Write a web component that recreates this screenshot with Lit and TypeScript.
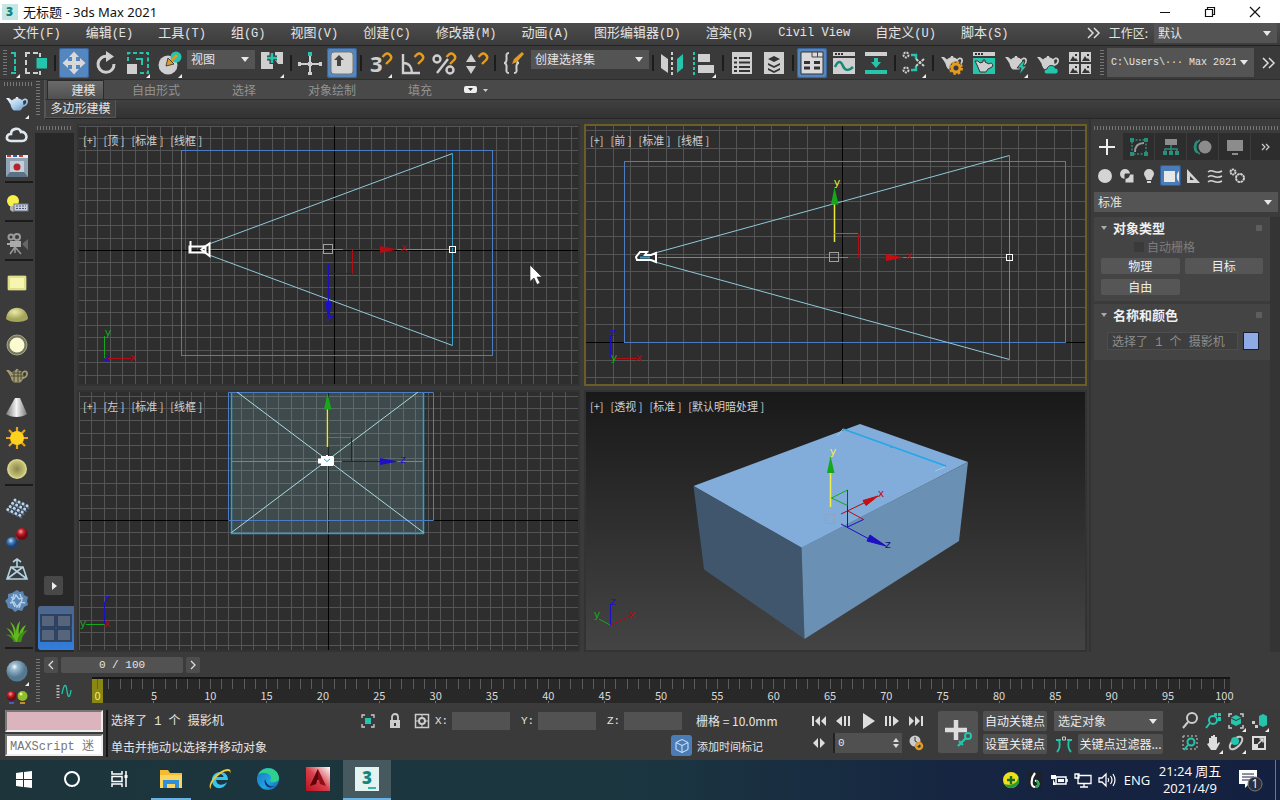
import { LitElement, html, svg, css } from "lit";
import { customElement, state } from "lit/decorators.js";
import { classMap } from "lit/directives/class-map.js";

const L = "#cfcfcf";
const T = "#25c4ac";
const G = "#e39b22";

const icon = (body: unknown, size = 24) =>
  html`<svg class="ic" viewBox="0 0 ${size} ${size}" width=${size} height=${size} aria-hidden="true">${body}</svg>`;

const magnet = svg`<path d="M14.500 6L17 3.500C20 1 25 5 22.500 8.500L18 13" fill="none" stroke=${G} stroke-width="2.400"/>`;
const teapot = (fill: string) => svg`<path fill=${fill} d="M1 6h3l3 2.500c1-1.200 2-1.700 3.500-2L11 5h2l.5 1.500c1.500.3 2.600.8 3.500 1.700C19 5.500 23 6 23 9.500c0 3-2.500 5-5 5.500-1 2-2 3-3 3.500H9c-2-1-3-3.500-3.500-6L3 8.500Z"/><path d="M18 9.500c1.500-2 3.500-1.200 3.200.5-.2 1.600-1.200 2.600-2.700 3Z" fill="#3a3a3a"/>`;

const tools: Record<string, unknown> = {
  region: svg`<path d="M1 2H17M1 22H17M2 1V23" stroke=${L} stroke-width="2" stroke-dasharray="5 3" fill="none"/><path d="M16 2v22" stroke=${L} stroke-width="2" stroke-dasharray="4 14"/><rect x="12.500" y="7" width="10.500" height="10.500" fill=${T}/>`,
  move: svg`<path fill="#d8d8d8" d="M12 .5L17 6h-3v4h4V7l5.500 5-5.500 5v-3h-4v4h3l-5 5.500L7 18h3v-4H6v3L.5 12 6 7v3h4V6H7Z"/>`,
  rotate: svg`<path d="M13.500 5.500A8 8 0 1 0 20 13" fill="none" stroke=${L} stroke-width="3"/><path d="M12 0l8 5.500-8 5.500Z" fill=${L}/>`,
  scale: svg`<path d="M2 10V2H22V22H14" fill="none" stroke=${T} stroke-width="2" stroke-dasharray="4 2.500"/><rect x="1" y="13" width="10" height="10" fill=${L}/><path d="M10 8h6v6" fill="none" stroke=${T} stroke-width="2"/>`,
  place: svg`<circle cx="10" cy="14" r="9.500" fill=${L}/><circle cx="18" cy="6" r="5.500" fill=${T}/><path d="M19 4l-7 7" stroke=${G} stroke-width="3"/><path d="M8 15l2-8 6 6Z" fill=${G} stroke="#444"/>`,
  pivot: svg`<path d="M1 1h9v8h3v9H1ZM15 1h8v12h-5l-2-3h-1Z" fill=${L}/><path d="M12 1v12M7 7h10" stroke="#3a3a3a" stroke-width="5"/><path d="M12 2v10M7 7h10" stroke=${T} stroke-width="2.500"/>`,
  manip: svg`<path d="M12 5V23M1 13H23" stroke=${L} stroke-width="2"/><path d="M10 11h4v4h-4ZM0 11h3v4H0ZM21 11h3v4h-3ZM10 21h4v3h-4Z" fill=${L}/><rect x="10" y="1" width="4" height="4" fill=${T}/>`,
  keyb: svg`<rect x="1" y="1" width="22" height="22" rx="3" fill="#d4d4d4" stroke="#777"/><path d="M9 4l5 5h-3v6H7V9H4Z" fill="#444"/>`,
  snap: svg`<text x="2" y="21" font-family="Open Sans, sans-serif" font-weight="700" font-size="22" fill=${L}>3</text>${magnet}`,
  angle: svg`<path d="M3 3V22H20M3 12c6 0 9 4 9 10" fill="none" stroke=${L} stroke-width="2.400"/>${magnet}`,
  percent: svg`<circle cx="5" cy="8" r="3.500" fill="none" stroke=${L} stroke-width="2.400"/><circle cx="18" cy="19" r="3.500" fill="none" stroke=${L} stroke-width="2.400"/><path d="M16 8L5 22" stroke=${L} stroke-width="2.400"/>${magnet}`,
  spin: svg`<path d="M2 11l5-8 5 8ZM2 15h10l-5 8Z" fill=${L}/>${magnet}`,
  sets: svg`<path d="M7 2C3 2 5 6 4.500 9 4.300 11 3 12 2 12c1 0 2.300 1 2.500 3 .5 3-1.500 7 2.500 7M12 22c4 0 2-4 2.500-7 .2-2 1.500-3 2.500-3-1 0-2-1-2.500-2" fill="none" stroke=${L} stroke-width="2"/><path d="M10 13l2-5 8-7 2 2-7 8Z" fill=${G}/>`,
  mirror: svg`<path d="M1 3l7 5v14l-7-5Z" fill=${L}/><path d="M12 1V24" stroke=${L} stroke-width="2" stroke-dasharray="3 2"/><path d="M23 3l-6 5v14l6-5Z" fill=${T}/>`,
  align: svg`<path d="M2 1V24" stroke=${T} stroke-width="2" stroke-dasharray="3 2"/><path d="M6 3h12v8H6ZM6 14h16v8H6Z" fill=${L}/>`,
  list: svg`<path d="M2 1h20v22H2Z" fill=${L}/><path d="M4 7h3M9 7h11M4 11.500h3M9 11.500h11M4 16h3M9 16h11M4 20h3M9 20h11" stroke="#333" stroke-width="2"/>`,
  layers: svg`<path d="M2 1h20v22H2Z" fill=${L}/><path d="M12 5l6 3-6 3-6-3ZM6 12l6 3 6-3v2l-6 3-6-3ZM6 17l6 3 6-3v2l-6 3-6-3Z" fill="#333"/>`,
  ribbon: svg`<path d="M1 1h22v22H1Z" fill="#dadada" stroke="#333"/><path d="M12 1v5h11M17.500 1v5" stroke="#444" fill="none"/><path d="M4 11.500h6M14 11.500h6M4 17h6M14 17h6" stroke="#333" stroke-width="3"/>`,
  curve: svg`<path d="M1 1h22v4H1Z" fill=${L}/><path d="M3 3h9" stroke="#333" stroke-width="2" stroke-dasharray="2 1"/><path d="M1 7h22v16H1Z" fill=${L}/><path d="M3 16c3-7 6-6 8-1s6 5 10 1" fill="none" stroke="#138b78" stroke-width="2.500"/>`,
  dope: svg`<path d="M1 1h22v4H1Z" fill=${L}/><path d="M1 19h22v4H1Z" fill=${T}/><path d="M12 7v5" stroke=${T} stroke-width="4"/><path d="M7 11h10l-5 6Z" fill=${T}/>`,
  schem: svg`<g fill="none" stroke=${L} stroke-width="2" stroke-dasharray="2 1"><circle cx="4" cy="4" r="2.500"/><circle cx="4" cy="19" r="2.500"/></g><path d="M9 4h5v4M9 19h5v-4" fill="none" stroke=${T} stroke-width="2.400"/><path d="M14 8l8 7M22 8l-8 7" stroke=${L} stroke-width="2" stroke-dasharray="3 1"/>`,
  setup: svg`${teapot(L)}<circle cx="16" cy="17" r="6.500" fill="#3a3a3a"/><circle cx="16" cy="17" r="4" fill="none" stroke=${G} stroke-width="3"/><circle cx="16" cy="17" r="6" fill="none" stroke=${G} stroke-width="2" stroke-dasharray="2.500 2.200"/>`,
  frame: svg`<path d="M1 1h22v4H1Z" fill=${L}/><path d="M3 3h9" stroke="#333" stroke-width="2" stroke-dasharray="2 1"/><path d="M1 7h22v16H1Z" fill=${T}/><path d="M3 10h3l2 2 3-1V9h2v2l4 2c2-2 5 0 3 3l-4 2-2 3H8l-3-7Z" fill=${L} stroke="#333"/>`,
  render: svg`${teapot(L)}<path d="M19 10l-6 7h4l-2 7 8-9h-4l2-5Z" fill=${T} stroke="#3a3a3a"/>`,
  cloud: svg`${teapot(L)}<path d="M10 23c-3-1-2-5 1-5 1-5 8-4 8-1 4 0 4 5 1 6Z" fill=${T} stroke="#3a3a3a"/>`,
  gallery: svg`<path d="M1 1h10v10H1ZM13 1h10v10H13ZM1 13h10v10H1ZM13 13h10v10H13Z" fill=${L}/><path d="M2 10l3-5 2 3 1-1 2 3ZM14 10l3-5 2 3 1-1 2 3ZM2 22l3-5 2 3 1-1 2 3ZM14 22l3-5 2 3 1-1 2 3ZM7 3h2v2H7ZM19 3h2v2h-2ZM7 15h2v2H7ZM19 15h2v2h-2Z" fill="#333"/>`,
};

const rail: Record<string, unknown> = {
  teapot: svg`<g>${teapot("url(#ice)")}</g>`,
  cloud: svg`<path d="M6 18c-6 0-5-7 0-7 0-6 9-7 10-2 6-1 8 9 1 9Z" fill="none" stroke="#dfe8ef" stroke-width="2.600"/>`,
  window: svg`<path d="M1 1h22v3H1Z" fill="#eee"/><path d="M2 1h4v2H2ZM14 1h4v2h-4Z" fill="#c33"/><path d="M8 1h4v2H8Z" fill="#35a"/><path d="M1 4h22v19H1Z" fill="#8fa3b5"/><path d="M5 7h14v11H5Z" fill="#c2ced8"/><path d="M1 23l4-5h14l4 5Z" fill="#5d7184"/><circle cx="12" cy="13" r="3.500" fill="#b8222c"/>`,
  bulb: svg`<circle cx="8" cy="8" r="6" fill="#f7ef4a"/><path d="M5 13h6v3l-3 3-3-2Z" fill="#b7b7a0"/><rect x="9" y="11" width="14" height="7" fill="#c9ced8" stroke="#6b7690"/><path d="M11 13h10M11 15.500h10" stroke="#4a5670" stroke-dasharray="2 1"/>`,
  camera: svg`<g stroke="#9a9a9a" fill="none" stroke-width="2"><circle cx="6" cy="5" r="2.500"/><circle cx="12" cy="5" r="3"/></g><path d="M5 9h11v6H5ZM2 11h3v2H2Z" fill="#aaa"/><path d="M10 15l-5 7M10 15l6 7M10 15v6" stroke="#999" stroke-width="1.500"/><path d="M17 12l6-5v11Z" fill="#666"/>`,
  rect: svg`<rect x="2" y="4" width="20" height="16" rx="3" fill="#77785f"/><rect x="4" y="6" width="16" height="12" fill="#f7f6b0" stroke="#e1e08a" stroke-width="2"/>`,
  dome: svg`<path d="M1 17C2 2 22 2 23 17c-4 4-18 4-22 0Z" fill="url(#dome)"/>`,
  sphere: svg`<circle cx="12" cy="12" r="10" fill="#77785f" stroke="#a6a78a"/><circle cx="12" cy="12" r="7.500" fill="#fbfad0"/>`,
  pot2: svg`${teapot("#a39c72")}<path d="M7 9h10M6 12h12M9 7v11M13 6v12M16 8v8" stroke="#3f3b28" stroke-width=".8"/>`,
  cone: svg`<path d="M10 3h5l7 16c-5 4-16 4-21 0Z" fill="url(#cone)"/>`,
  sun: svg`<path d="M12 1v22M1 12h22M4 4l16 16M20 4L4 20" stroke="#e6a516" stroke-width="2.200"/><circle cx="12" cy="12" r="7" fill="#ffd21f"/>`,
  disc: svg`<circle cx="12" cy="12" r="10" fill="#d9d58a"/><circle cx="12" cy="12" r="8.500" fill="url(#disc)"/>`,
  dots: [0, 1, 2, 3].map((r) => [0, 1, 2, 3].map((c) => {
    const x = 10 - r * 2.4 + c * 4;
    const y = 4 + r * 3.2 + c * 1.9;
    return svg`<path d="M${x} ${y + 1}l2 2" stroke="#4d6a88" stroke-width="2"/><circle cx=${x} cy=${y} r="1.500" fill="#bcd6ee"/>`;
  })),
  mol: svg`<path d="M7 16L17 7" stroke="#8a3540" stroke-width="4"/><circle cx="17" cy="7" r="6" fill="url(#red)"/><circle cx="7" cy="16" r="6" fill="url(#blu)"/>`,
  pyr: svg`<path d="M12 1v8M8 4l4-3 4 3M6 9h12l4 12H2ZM6 9l16 12M18 9L2 21" fill="none" stroke="#b3d3e2" stroke-width="1.600"/>`,
  puff: svg`<path d="M12 1l3 2 3-1 1 4 4 2-1 4 1 4-4 2-2 4-4-1-3 2-3-3-4-1-1-4-2-3 3-3 0-4 4-1Z" fill="#5d87b4"/><path d="M6 8l3 2 2-4 3 4 4-1M5 14l4-1 3 5 4-5 4 1M9 5l-2 7 3 6M15 5l2 6-3 8" stroke="#b4d2ec" stroke-width="1.300" fill="none"/>`,
  grass: svg`<path d="M9 22C7 14 4 10 1 8c5 1 7 5 8 8C9 9 7 5 5 2c5 3 6 8 6 12 0-6 1-10 4-13-1 6-2 10-1 14 1-5 3-8 7-10-3 5-4 10-5 17Z" fill="#62b81e"/><path d="M12 22c1-7 5-11 11-12-5 4-6 8-7 12ZM9 22C7 18 5 16 1 15c4-1 8 1 10 7Z" fill="#3f8f12"/>`,
  ball: svg`<circle cx="12" cy="12" r="10.500" fill="url(#ball)"/>`,
};

const axisText = (x: number, y: number, c: string, t: string) =>
  svg`<text x=${x} y=${y} fill=${c} font-family="DejaVu Sans, sans-serif" font-size="11" text-anchor="middle">${t}</text>`;

const RED = "#b00d14";
const GRN = "#16a81c";
const BLU = "#1d10c4";

function lines(ox: number, oy: number, step: number, x0: number, x1: number, y0: number, y1: number) {
  let d = "";
  for (let k = Math.ceil((x0 - ox) / step); ox + k * step < x1; k++) d += `M${Math.round(ox + k * step) - 0.5} ${y0}V${y1}`;
  for (let k = Math.ceil((y0 - oy) / step); oy + k * step < y1; k++) d += `M${x0} ${Math.round(oy + k * step) - 0.5}H${x1}`;
  return svg`<path d=${d} stroke="#545454" fill="none"/>`;
}

const sceneTop = svg`
  ${lines(335, 251, 12.45, 79, 578, 126, 384)}
  <path d="M334.500 126V384M79 250.500H578" stroke="#000"/>
  <rect x="181.500" y="150.500" width="311" height="205" fill="none" stroke="#4b7cc4"/>
  <path d="M201 247L452.500 153.500M201 252L452.500 345.500" stroke="#8ccbd9"/>
  <path d="M452.500 153.500V345.500M209 249.500H452" stroke="#2f9fd0"/>
  <path d="M190.500 241v12.500M189.500 246.500h16v6h-16ZM209.500 243.500v12.500l-8-6.500Z" fill="none" stroke="#fff" stroke-width="2"/>
  <rect x="449.500" y="246.500" width="6" height="6" fill="#2e2e2e" stroke="#fff"/><path d="M452.500 248v4" stroke="#2f9fd0"/>
  <rect x="323.500" y="244.500" width="9" height="9" fill="none" stroke="#a0a0a0"/>
  <path d="M343 249.500H381M352.500 249V274" stroke=${RED} fill="none"/><path d="M380 246l18 3.500-18 3.500Z" fill=${RED}/>
  <path d="M328.500 273.500H352M328.500 264V303" stroke=${BLU} fill="none"/><path d="M325 302h7l-3.500 18Z" fill=${BLU}/>
  ${axisText(404, 251, RED, "x")}${axisText(331, 322, BLU, "z")}
  <path d="M104.500 336V358" stroke=${GRN}/><path d="M105 358.500H131" stroke=${RED}/>
  ${axisText(108, 336, GRN, "y")}${axisText(107, 361, BLU, "z")}${axisText(133, 361, RED, "x")}
  <path d="M530 265v16.500l4-3.500 3 6.500 3-1.500-3-6h5Z" fill="#fff" stroke="#222" stroke-width=".6"/>`;

const sceneFront = svg`
  ${lines(843, 343, 17.64, 586, 1085, 126, 384)}
  <path d="M842.500 126V384M586 342.500H1085" stroke="#000"/>
  <rect x="624.500" y="161.500" width="441" height="181" fill="none" stroke="#4b7cc4"/>
  <path d="M655 253L1009.500 155.500M655 262L1009.500 359.500" stroke="#8ccbd9"/>
  <path d="M1009.500 155.500V359.500M658 257.500H1009" stroke="#2f9fd0"/>
  <path d="M640 252h7l-2 3h6l5-2v9l-5-2H637l-1-3Z" fill="none" stroke="#fff" stroke-width="2"/><path d="M640 257.500h10" stroke="#2f9fd0" stroke-width="2"/>
  <rect x="1006.500" y="254.500" width="6" height="6" fill="#2e2e2e" stroke="#fff"/><path d="M1009.500 256v4" stroke="#2f9fd0"/>
  <rect x="829.500" y="252.500" width="9" height="9" fill="none" stroke="#a0a0a0"/>
  <path d="M834.500 204V242" stroke="#e8e83c" stroke-width="1.500"/><path d="M831 204.500h7.500L834.500 187Z" fill=${GRN}/>
  <path d="M834.500 233.500H858" stroke=${GRN}/><path d="M858.500 234V257M848 257.500H887" stroke=${RED}/><path d="M886 254l18 3.500-18 3.500Z" fill="#c80c10"/>
  ${axisText(837, 186, "#e8e83c", "y")}${axisText(909, 259, RED, "x")}
  <path d="M610.500 335V358" stroke=${BLU}/><path d="M615 358.500H637" stroke=${RED}/>
  ${axisText(613, 336, BLU, "z")}${axisText(614, 361, GRN, "y")}${axisText(639, 361, RED, "x")}`;

const sceneLeft = svg`
  ${lines(329, 521, 12.45, 79, 578, 392, 650)}
  <path d="M328.500 392V650M79 520.500H578" stroke="#000"/>
  <rect x="231.500" y="391.500" width="192" height="142" fill="#8fd4dc" fill-opacity=".17" stroke="#2f9fd0" stroke-width="1.500"/>
  <path d="M228.500 520.500V392.500H433.500V520.500Z" fill="none" stroke="#4b7cc4"/>
  <path d="M237 392L423.500 532.500M418 392L231.500 532.500" stroke="#a9dbe2"/>
  <path d="M232 461.500H423M327.500 461V533" stroke="#2f9fd0"/>
  <path d="M322 457h10v8h-10ZM318 459.500h4v3h-4M333 456.500v9M327 455v2" fill="#fff" stroke="#fff" stroke-width="2"/>
  <path d="M324 459l3 2.500 3-2.500" fill="none" stroke="#2f9fd0"/>
  <path d="M327.500 408V447" stroke="#e8e83c" stroke-width="1.500"/><path d="M324 409.500h7.500L327.500 393Z" fill=${GRN}/>
  <path d="M328 437.500H351" stroke=${GRN}/><path d="M351.500 438V461M342 461.500H381" stroke=${BLU}/><path d="M380 458l18 3.500-18 3.500Z" fill=${BLU}/>
  ${axisText(403, 463, BLU, "z")}
  <path d="M104.500 602V624" stroke=${BLU}/><path d="M86 624.500H104" stroke=${GRN}/>
  ${axisText(107, 602, BLU, "z")}${axisText(83, 627, GRN, "y")}${axisText(107, 627, RED, "x")}`;

const scenePersp = svg`
  <defs>
    <linearGradient id="bg" x2="0" y2="1"><stop stop-color="#191919"/><stop offset="1" stop-color="#444"/></linearGradient>
    <linearGradient id="ice" x2="1" y2="1"><stop stop-color="#fff"/><stop offset=".55" stop-color="#a8cdea"/><stop offset="1" stop-color="#5c88b8"/></linearGradient>
    <radialGradient id="dome" cx=".4" cy=".3"><stop stop-color="#eceaa8"/><stop offset="1" stop-color="#a5a45c"/></radialGradient>
    <linearGradient id="cone"><stop stop-color="#777"/><stop offset=".5" stop-color="#f4f4f4"/><stop offset="1" stop-color="#777"/></linearGradient>
    <radialGradient id="disc"><stop stop-color="#8a874a"/><stop offset="1" stop-color="#c9c57c"/></radialGradient>
    <radialGradient id="red" cx=".4" cy=".3"><stop stop-color="#f5a0a0"/><stop offset=".5" stop-color="#c41e2a"/><stop offset="1" stop-color="#6e0c14"/></radialGradient>
    <radialGradient id="blu" cx=".4" cy=".3"><stop stop-color="#bcd8f4"/><stop offset=".5" stop-color="#3e78b4"/><stop offset="1" stop-color="#1d3f6a"/></radialGradient>
    <radialGradient id="ball" cx=".38" cy=".3"><stop stop-color="#fff"/><stop offset=".3" stop-color="#9bbbd0"/><stop offset="1" stop-color="#54788f"/></radialGradient>
    <linearGradient id="edge" x2="1" y2="1"><stop stop-color="#1b6fc8"/><stop offset=".6" stop-color="#1fa5e0"/><stop offset="1" stop-color="#1a56b0"/></linearGradient>
    <linearGradient id="cad" x1="0" y1="1" x2="1" y2="0"><stop stop-color="#b8121f"/><stop offset=".5" stop-color="#d8404c"/><stop offset="1" stop-color="#fff"/></linearGradient>
  </defs>
  <rect x="586" y="392" width="499" height="258" fill="url(#bg)"/>
  <path d="M693.500 486L860 424 968 462 801.500 548Z" fill="#82acd9"/>
  <path d="M693.500 486L801.500 547.500 804.500 639 704 569.500Z" fill="#40566c"/>
  <path d="M801.500 547.500L968 462 959 541 804.500 639Z" fill="#6a90b3"/>
  <path d="M843 429L946 466M891 446v2" stroke="#22a8e8" stroke-width="1.500"/><path d="M945 467L935 471M843 429L837 436" stroke="#8cd2f0"/>
  <rect x="825.500" y="514.500" width="9" height="9" fill="none" stroke="#8aa5bd"/>
  <path d="M830.500 472V507" stroke="#f0f04a" stroke-width="1.500"/><path d="M827 473h7.500L830.500 456Z" fill=${GRN}/>
  <path d="M847.500 490L831.500 498 847.500 505.500" fill="none" stroke=${GRN}/>
  <path d="M847.500 490V510M841 514L866 502M848 511L863.500 519.500" fill="none" stroke=${RED}/><path d="M863 500.500L878 496 866 505.500Z" fill="#c80c10" stroke="#c80c10"/>
  <path d="M847.500 506V527L863.500 519.500M841 524L869 539" fill="none" stroke=${BLU}/><path d="M870 535L886 546 867 541Z" fill=${BLU} stroke=${BLU}/>
  ${axisText(833, 455, "#f0f04a", "y")}${axisText(881, 497, "#c80c10", "x")}${axisText(888, 548, "#15107a", "z")}
  <path d="M610.500 604V625" stroke=${BLU}/><path d="M611 625L630 616" stroke=${RED}/><path d="M610 625L599 619" stroke=${GRN}/>
  ${axisText(613, 605, BLU, "z")}${axisText(632, 618, RED, "x")}${axisText(597, 618, GRN, "y")}`;

const menus = [["文件", "(F)"], ["编辑", "(E)"], ["工具", "(T)"], ["组", "(G)"], ["视图", "(V)"], ["创建", "(C)"], ["修改器", "(M)"], ["动画", "(A)"], ["图形编辑器", "(D)"], ["渲染", "(R)"], ["", "Civil View"], ["自定义", "(U)"], ["脚本", "(S)"]];

const views = [
  { box: "79 126 499 258", labels: ["[+]", "[顶 ]", "[标准 ]", "[线框 ]"], scene: sceneTop },
  { box: "586 126 499 258", labels: ["[+]", "[前 ]", "[标准 ]", "[线框 ]"], scene: sceneFront },
  { box: "79 392 499 258", labels: ["[+]", "[左 ]", "[标准 ]", "[线框 ]"], scene: sceneLeft },
  { box: "586 392 499 258", labels: ["[+]", "[透视 ]", "[标准 ]", "[默认明暗处理 ]"], scene: scenePersp },
];

const panelTabs = [
  svg`<path d="M12 4V20M4 12H20" stroke="#eee" stroke-width="2"/>`,
  svg`<rect x="5" y="5" width="14" height="14" fill="none" stroke="#2d8d7c" stroke-width="1.500" stroke-dasharray="2 1.500"/><path d="M3 3h4v4H3ZM17 3h4v4h-4ZM3 17h4v4H3ZM17 17h4v4h-4Z" fill="#2d8d7c"/><path d="M8 17c0-6 3-9 9-9" fill="none" stroke="#999" stroke-width="2"/>`,
  svg`<rect x="6" y="4" width="12" height="6" fill="#8c8c8c"/><path d="M12 10v8M6 17v-3h12v3" fill="none" stroke="#2d8d7c" stroke-width="1.500"/><path d="M4 16h4v4H4ZM10 16h4v4h-4ZM16 16h4v4h-4Z" fill="#2d8d7c"/>`,
  svg`<path d="M6 6a8 8 0 0 0 0 12M9 5a8 8 0 0 0 0 14" fill="none" stroke="#2d8d7c" stroke-width="1.500"/><circle cx="14" cy="12" r="6.500" fill="#8c8c8c"/>`,
  svg`<path d="M4 5h16v11H4ZM9 18h6v2H9Z" fill="#8c8c8c"/>`,
];
const cats = [
  svg`<circle cx="10" cy="10" r="7" fill="#d4d4d4"/>`,
  svg`<circle cx="8" cy="8" r="5" fill="#d4d4d4"/><path d="M8 8h9v9H8Z" fill="#d4d4d4" stroke="#3b3b3b"/><path d="M8 13a5 5 0 0 0 5-5H8Z" fill="#3b3b3b"/>`,
  svg`<path d="M5 8a5 5 0 0 1 10 0c0 2-2 3-2.500 6h-5C7 11 5 10 5 8ZM8 15h4v2H8Z" fill="#d4d4d4"/>`,
  svg`<path d="M3 5h11v11H3Z" fill="#e8e8e8"/><path d="M18 5v11c-3-3-3-8 0-11Z" fill="#e8e8e8"/>`,
  svg`<path d="M4 3L17 17H4ZM7 10v4h4Z" fill="#d4d4d4" fill-rule="evenodd"/>`,
  svg`<path d="M3 6c5-4 7 3 14-1M3 11c5-4 7 3 14-1M3 16c5-4 7 3 14-1" fill="none" stroke="#d4d4d4" stroke-width="1.500"/>`,
  svg`<circle cx="6" cy="6" r="2.500" fill="none" stroke="#d4d4d4" stroke-width="2" stroke-dasharray="2 .6"/><circle cx="13" cy="12" r="4" fill="none" stroke="#d4d4d4" stroke-width="2" stroke-dasharray="2.500 .6"/>`,
];

const nav = [
  svg`<circle cx="12" cy="7" r="5" fill="none" stroke="#ccc" stroke-width="2"/><path d="M8 11l-5 6" stroke="#ccc" stroke-width="2"/>`,
  svg`<path d="M11 2h3v3h-3ZM15 2h3v3h-3ZM15 6h3v4h-3Z" fill="#25c4ac"/><circle cx="10" cy="9" r="4" fill="none" stroke="#25c4ac" stroke-width="2"/><path d="M7 12l-4 5" stroke="#25c4ac" stroke-width="2"/>`,
  svg`<path d="M3 6V3h3M14 3h3v3M3 14v3h3M17 14v3h-3" fill="none" stroke="#ccc" stroke-width="1.500"/><path d="M10 4l5 2.500v6L10 15l-5-2.500v-6Z" fill="#25c4ac"/><path d="M5 7l5 2.500L15 7" fill="none" stroke="#333"/>`,
  svg`<path d="M14 3l4 2v9l-4 2-4-2V5Z" fill="#25c4ac"/><path d="M3 10h3v3H3ZM6 14h3v3H6Z" fill="#ccc"/>`,
  svg`<rect x="3" y="3" width="14" height="13" fill="none" stroke="#ccc" stroke-dasharray="2 2"/><circle cx="11" cy="9" r="3.500" fill="none" stroke="#25c4ac" stroke-width="2"/><path d="M8 12l-4 5" stroke="#25c4ac" stroke-width="2"/>`,
  svg`<path d="M6 10V5h2v4V3h2v6V2h2v7V4h2v7l2-2 1 1-4 7H8l-4-6Z" fill="#ddd"/>`,
  svg`<ellipse cx="10" cy="10" rx="8" ry="4" transform="rotate(-45 10 10)" fill="none" stroke="#ccc" stroke-width="2"/><circle cx="9" cy="8" r="4" fill="#25c4ac"/>`,
  svg`<path d="M3 3h14v14H3Z" fill="#ddd"/><path d="M5 5h10v10H5Z" fill="#333"/><path d="M4 16v-5h5v5Z" fill="#ddd"/><path d="M9 11l5-5M10.500 6H14v3.500" stroke="#ddd" stroke-width="1.500" fill="none"/>`,
];

const taskIcons: [string, number, unknown, string][] = [
  ["开始", 48, svg`<path d="M4 6l7-1v7H4ZM12 5l8-1v8h-8ZM4 13h7v7l-7-1ZM12 13h8v8l-8-1Z" fill="#fff"/>`, ""],
  ["搜索", 48, svg`<circle cx="12" cy="12" r="7" fill="none" stroke="#fff" stroke-width="2"/>`, ""],
  ["任务视图", 48, svg`<path d="M4 4v3h10V4M4 20v-3h10v3M4 9.500h10v5H4ZM18 4v16" fill="none" stroke="#fff" stroke-width="1.500"/><path d="M16.500 8h3v3h-3Z" fill="#fff"/>`, ""],
  ["文件资源管理器", 53, svg`<path d="M1 3h8l2 3h12v15H1Z" fill="#f5b932"/><path d="M1 8h22v13H1Z" fill="#fbd65e"/><path d="M4 21v-8h16v8h-4v-4H8v4Z" fill="#2f8fd8"/>`, "open"],
  ["Internet Explorer", 46, svg`<path d="M20 13H8c1 6 7 6 11 2-3 9-15 8-15-2C4 3 20 2 20 13ZM8.500 10h7c-.5-4-6.500-4-7 0Z" fill="#35c5f2"/><path d="M3 22C-2 19 8 3 20 2c4 0 2 5 2 5s1-3-2-3C12 4 1 17 3 22Z" fill="#f4c92f"/>`, ""],
  ["Microsoft Edge", 50, svg`<circle cx="12" cy="12" r="11" fill="url(#edge)"/><path d="M2 8C6-2 22-1 23 11c0 5-8 5-9 3 3-4-1-8-5-8-3 0-5 0-7 2Z" fill="#2fd08c"/><path d="M9 12c-2 6 4 11 10 7-6 2-9-3-10-7Z" fill="#12306e"/>`, ""],
  ["AutoCAD", 50, svg`<path d="M0 0h24v24H0Z" fill="url(#cad)"/><path d="M12 2l8 17-6-2-1-4h-2l-1 4-6 2Z" fill="#8d0f18"/><path d="M12 2v11h-1l-1 4-6 2Z" fill="#5a060c"/>`, ""],
  ["3ds Max", 48, svg`<path d="M0 0h24v24H0Z" fill="#e3f3f2"/><text x="7" y="17" font-family="Open Sans, sans-serif" font-weight="800" font-size="17" fill="#14857c">3</text><path d="M13 20h8v2h-8Z" fill="#37b6a6"/>`, "current"],
];

@customElement("app-root")
export class AppRoot extends LitElement {
  @state() private activeView = 1;

  static styles = css`
    :host { display: flex; flex-direction: column; min-height: 100vh; background: #3b3b3b; color: #e4e4e4; font: 12px/16px "Noto Sans CJK SC", sans-serif; }
    * { box-sizing: border-box; }
    button, input, select { font: inherit; color: inherit; border: 0; margin: 0; padding: 0; background: none; min-width: 0; }
    button { display: flex; align-items: center; justify-content: center; white-space: nowrap; }
    svg { display: block; flex: none; }
    .ic { overflow: visible; }
    .mono { font-family: "Liberation Mono", "Noto Sans CJK SC", monospace; }
    .sel { display: grid; align-items: center; background: #545454; }
    .sel select { grid-area: 1 / 1; width: 100%; height: 100%; padding: 0 18px 0 4px; appearance: none; }
    .sel::after { content: ""; grid-area: 1 / 1; justify-self: end; margin-right: 6px; border: 4px solid transparent; border-top: 5px solid #e8e8e8; border-bottom: 0; pointer-events: none; }
    .dotsv { width: 4px; background: radial-gradient(circle, #777 40%, transparent 60%) 0 0 / 2px 3px; }
    .dotsh { height: 4px; background: radial-gradient(circle, #777 40%, transparent 60%) 0 0 / 3px 2px; }

    .title { display: flex; align-items: center; height: 23px; background: #fff; color: #111; font: 13px/20px "Noto Sans", "Noto Sans CJK SC", sans-serif; padding: 0 3px 0 2px; gap: 5px; }
    .title h1 { font: inherit; margin: 0; flex: 1; }
    .title .wins { display: flex; }
    .title button { width: 45px; height: 20px; }

    .menu { display: flex; align-items: center; height: 23px; background: linear-gradient(#4c4c4c, #3c3c3c); border-bottom: 1px solid #222; padding: 0 3px 2px 13px; gap: 25px; font-size: 13px; }
    .menu button { align-items: baseline; font-size: 13px; }
    .menu .key { font-size: 12px; }
    .menu .space { flex: 1; display: flex; justify-content: flex-end; }
    .menu .ws { display: flex; align-items: center; gap: 6px; font-size: 12px; margin-left: -17px; }
    .menu .sel { width: 123px; height: 20px; }

    .tools { display: flex; align-items: center; height: 34px; background: #3a3a3a; border-bottom: 1px solid #2e2e2e; padding-left: 3px; }
    .tools .dotsv { height: 28px; }
    .tools .cell + .dotsv { margin-left: 4px; }
    .cell { display: grid; width: 32px; height: 30px; place-items: center; border-radius: 3px; }
    .cell > svg { grid-area: 1 / 1; }
    .cell.on { background: #5486bf; box-shadow: inset 0 0 0 1px #3a659c; width: 30px; margin: 0 1px; }
    .cell.part { width: 13px; }
    .fly::after { content: ""; grid-area: 1 / 1; align-self: end; justify-self: end; border: 2px solid transparent; border-right-color: #eee; border-bottom-color: #eee; }
    .bar { width: 2px; height: 16px; margin: 0 2px; background: #1c1c1c; }
    .tools .sel { height: 19px; margin: -7px 1px 0; }
    .tools .v1 { width: 68px; } .tools .v2 { width: 118px; }
    .tools .path { width: 147px; height: 29px; margin: 0 auto 0 3px; font-size: 10px; }
    .tools .more { width: 24px; }

    .body { display: grid; grid-template-columns: 35px 1fr; flex: 1; }
    .rail { display: flex; flex-direction: column; padding: 1px 0 0 2px; }
    .rail .dotsh { margin: 1px 2px 2px 1px; }
    .rail button { display: grid; place-items: center; height: 31px; width: 30px; }
    .rail button > svg { grid-area: 1 / 1; }
    .rail hr { height: 2px; margin: 0 0 6px 3px; border: 0; background: #1b1b1b; width: 28px; }
    .rail .balls { height: 22px; }
    .work { display: flex; flex-direction: column; min-width: 0; }

    .ribbon { display: flex; gap: 4px; padding-left: 1px; height: 39px; }
    .ribbon > .dotsv { height: 37px; }
    .rb { flex: 1; border-left: 1px solid #555; display: flex; flex-direction: column; }
    .tabs { display: flex; align-items: end; height: 20px; background: #494949; border-bottom: 1px solid #2e2e2e; padding-left: 2px; color: #929292; gap: 52px; }
    .tabs button { height: 19px; }
    .tabs .act { width: 57px; margin-right: -24px; padding-left: 16px; color: #e4e4e4; background: linear-gradient(#6a6a6a, #505050); border: 1px solid #2b2b2b; border-bottom: 0; }
    .tabs .drop { margin-left: -20px; }
    .sub { flex: 1; display: flex; background: linear-gradient(#404040, #323232); border-bottom: 1px solid #262626; }
    .sub button { width: 71px; padding-bottom: 1px; border: 1px solid #565656; border-top: 0; background: #424242; font-size: 12px; }

    .main { display: grid; grid-template-columns: 39px minmax(0, 1fr) 191px; flex: 1; }
    .lay { display: flex; flex-direction: column; padding-top: 7px; }
    .lay .dotsh { width: 36px; margin-left: 1px; }
    .well { flex: 1; display: flex; flex-direction: column; justify-content: flex-end; align-items: flex-end; gap: 11px; margin-top: 3px; padding-bottom: 2px; background: #282828; }
    .well .play { width: 19px; height: 19px; margin-right: 11px; border-radius: 2px; background: #484848; }
    .well .quad { width: 36px; height: 44px; border-radius: 3px 0 0 3px; background: linear-gradient(#4f6588, #3f6fae 50%, #2f7fe0); }
    .views { display: grid; grid-template: 1fr 1fr / 1fr 1fr; gap: 4px; padding: 5px 2px 0 3px; background: #3a3a3a; }
    .view { display: grid; min-width: 0; min-height: 0; border: 2px solid #333; background: #2e2e2e; overflow: hidden; }
    .view.on { border-color: #6c5c26; }
    .view > svg { grid-area: 1 / 1; width: 100%; height: 100%; min-height: 258px; }
    .labels { grid-area: 1 / 1; display: flex; gap: 7px; align-self: start; padding: 6px 0 0 4px; font-size: 11px; color: #cfcfcf; z-index: 1; }

    .panel { display: flex; flex-direction: column; padding: 7px 0 0 1px; border-left: 2px solid #333; }
    .panel > .dotsh { margin: 0 2px 3px 1px; }
    .ptabs { display: flex; height: 27px; background: #2d2d2d; }
    .ptabs button { width: 32px; border-right: 1px solid #3b3b3b; }
    .ptabs button:first-child { background: #3b3b3b; width: 31px; }
    .ptabs button:last-child { border: 0; flex: 1; }
    .cats { display: flex; gap: 1px; padding: 5px 0 6px 2px; }
    .cats button { width: 21px; height: 21px; border-radius: 3px; }
    .cats .on { background: #4a7db8; box-shadow: inset 0 0 0 1px #2f5a90; }
    .panel .sel { height: 20px; margin: 0 2px 5px 2px; }
    .scroll { flex: 1; padding: 0 10px 0 0; background: linear-gradient(90deg, transparent 178px, #343434 178px); }
    .roll { margin: 0 0 3px 2px; background: #444; }
    .roll h2 { display: flex; align-items: center; gap: 6px; margin: 0; padding: 0 8px 0 7px; height: 21px; font-size: 13px; font-weight: 700; color: #f0f0f0; }
    .roll h2::before { content: ""; border: 3px solid transparent; border-top: 4px solid #aaa; border-bottom: 0; }
    .roll h2 i { margin-left: auto; width: 6px; height: 6px; background: radial-gradient(circle, #777 45%, transparent 55%) 0 0 / 2px 2px; }
    .roll .auto { display: flex; align-items: center; gap: 3px; height: 18px; padding-left: 40px; color: #7d7d7d; }
    .roll .auto input { appearance: none; width: 10px; height: 10px; background: #3a3a3a; }
    .btns { display: grid; grid-template-columns: 1fr 1fr; gap: 5px; padding: 2px 7px 6px; }
    .btns button { height: 16px; border-radius: 2px; background: #565656; color: #eee; }
    .name { display: flex; gap: 5px; padding: 7px 11px 10px 13px; }
    .name input { flex: 1; height: 18px; padding: 0 4px; background: #3e3e3e; border: 1px solid #4d4d4d; color: #8d8d8d; }
    .name button { width: 16px; height: 18px; background: #8fabe6; border: 1px solid #1a1f30; }

    .time { display: grid; grid-template: 25px 31px / 9px 48px 1fr 50px; }
    .time > .dotsv { grid-row: 1 / 3; margin: 6px 0 6px 1px; }
    .slider { grid-column: 2 / 5; display: flex; gap: 3px; padding-top: 5px; font-size: 11px; }
    .slider button { width: 14px; height: 16px; border-radius: 2px; background: #4d4d4d; }
    .slider .knob { width: 122px; background: #525252; }
    .time .mini { align-self: start; width: 16px; margin: 6px 0 0 12px; }
    .ruler { display: grid; grid-template-columns: repeat(101, minmax(0, 1fr)); height: 26px; background: #282828; border-top: 2px solid #151515; font-size: 11px; line-height: 12px; }
    .tick { display: flex; flex-direction: column; align-items: center; white-space: nowrap; color: #dadada; }
    .tick::before { content: ""; width: 1px; height: 10px; flex: none; background: #5c5c5c; }
    .tick span { display: flex; justify-content: center; width: 0; }
    .tick.maj::after { content: ""; width: 1px; flex: 1; background: #777; }
    .tick.now { background: #8a8714; color: #f0f060; }

    .status { display: flex; height: 52px; padding: 2px 10px 0 5px; background: #3a3a3a; }
    .script { display: flex; flex-direction: column; gap: 2px; width: 98px; }
    .script input { height: 22px; border: 2px solid; border-color: #777 #eee #eee #777; padding: 0 3px; width: 100%; color: #777; background: #fff; }
    .script .pink { background: #dbb4bd; }
    .vbar { width: 2px; height: 47px; margin: 0 3px; background: #151515; }
    .msg { flex: 1; display: flex; flex-direction: column; gap: 9px; padding-top: 4px; min-width: 0; white-space: nowrap; }
    .coord { display: flex; flex-direction: column; width: 456px; gap: 4px; }
    .row { display: flex; align-items: center; height: 21px; }
    .coord .row { padding-left: 3px; }
    .coord .row button { width: 27px; }
    .coord label { display: flex; align-items: center; gap: 4px; font-size: 11px; width: 86px; }
    .coord label input { width: 58px; height: 18px; background: #525252; }
    .coord .row .snap { width: 21px; height: 21px; background: #4a7db8; border-radius: 3px; }
    .coord .tag { padding-left: 320px; gap: 5px; font-size: 11px; }
    .coord .grid { padding-left: 3px; }
    .playb { display: flex; flex-direction: column; gap: 1px; width: 121px; margin-right: 10px; }
    .playb .row { justify-content: space-between; }
    .playb .row button { width: 24px; height: 20px; }
    .frame { display: flex; align-items: center; width: 69px; height: 20px; background: #505050; border-left: 2px solid #222; }
    .frame input { flex: 1; padding-left: 3px; width: 30px; font-size: 11px; }
    .big { width: 40px; height: 42px; margin-top: 1px; border-radius: 3px; background: #525252; }
    .keys { display: grid; grid-template: 20px 20px / 64px 109px; gap: 3px 7px; margin: 0 0 0 5px; padding-top: 1px; align-content: start; }
    .keys > button, .filt button { border-radius: 2px; background: #505050; color: #eee; height: 20px; }
    .filt { display: flex; gap: 4px; }
    .filt button { flex: 1; }
    .nav { display: grid; grid-template-columns: repeat(4, 23px); grid-auto-rows: 22px; margin-left: 15px; align-content: start; }
    .nav button { display: grid; place-items: center; }
    .nav button > svg { grid-area: 1 / 1; }

    .task { display: flex; align-items: center; height: 40px; background: linear-gradient(90deg, #1d343b, #1b3640 50%, #162542 75%, #14203f); color: #fff; font: 13px/17px "Open Sans", "Noto Sans CJK SC", sans-serif; }
    .task button { height: 40px; }
    .task .app { border-bottom: 2px solid transparent; }
    .task .open { background: linear-gradient(#69b3e4, #69b3e4) center bottom / 40px 2px no-repeat; background-origin: border-box; }
    .task .current { background: #46595f; border-color: #69b3e4; }
    .tray { display: flex; align-items: center; margin-left: auto; }
    .tray button { width: 24px; }
    .tray .lang { width: 36px; }
    .tray .clock { width: 70px; flex-direction: column; }
    .tray .note { width: 50px; }
    .tray .peek { width: 5px; height: 40px; border-left: 1px solid #6d7690; }
  `;

  private tool(name: string, label: string, cls = "") {
    return html`<button class="cell ${cls}" aria-label=${label}>${icon(tools[name])}</button>`;
  }

  private railBtn(name: string, cls = "") {
    return html`<button class=${cls} aria-label=${name}>${icon(rail[name])}</button>`;
  }

  private sel(cls: string, label: string, value: string) {
    return html`<span class="sel ${cls}"><select aria-label=${label}><option>${value}</option></select></span>`;
  }

  private chevrons(size = 16) {
    return icon(svg`<path d="M3 3l5 5-5 5M9 3l5 5-5 5" fill="none" stroke="#ddd" stroke-width="1.500"/>`, size);
  }

  private titleBar() {
    return html`<header class="title">
      <svg width="16" height="18" viewBox="0 0 16 18"><path d="M0 1h16v16H0Z" fill="#c4e7e5"/><text x="4" y="13" font-family="Open Sans, sans-serif" font-weight="800" font-size="12" fill="#14857c">3</text></svg>
      <h1>无标题 - 3ds Max 2021</h1>
      <div class="wins">
        <button aria-label="最小化">${icon(svg`<path d="M3 8.500H13" stroke="#111"/>`, 16)}</button>
        <button aria-label="还原">${icon(svg`<path d="M3.500 5.500h7v7h-7ZM5.500 5.500v-2h7v7h-2" fill="none" stroke="#111" stroke-width="1.200"/>`, 16)}</button>
        <button aria-label="关闭">${icon(svg`<path d="M3 3l10 10M13 3L3 13" stroke="#111" stroke-width="1.200"/>`, 16)}</button>
      </div>
    </header>`;
  }

  private toolbar() {
    const bar = html`<span class="bar"></span>`;
    return html`<div class="tools" role="toolbar">
      <span class="dotsv"></span>
      <button class="cell part fly" aria-label="选择过滤器"><svg width="12" height="24" viewBox="0 0 12 24"><path d="M3 2H8M7 1V23M3 22H8" fill="none" stroke=${T} stroke-width="2" stroke-dasharray="5 2"/></svg></button>
      ${this.tool("region", "矩形选择区域")}${bar}
      ${this.tool("move", "选择并移动", "on")}${this.tool("rotate", "选择并旋转")}${this.tool("scale", "选择并缩放", "fly")}${this.tool("place", "选择并放置", "fly")}
      ${this.sel("v1", "参考坐标系", "视图")}${this.tool("pivot", "使用轴点中心", "fly")}${bar}
      ${this.tool("manip", "选择并操纵")}${this.tool("keyb", "键盘快捷键覆盖切换", "on")}${bar}
      ${this.tool("snap", "捕捉开关", "fly")}${this.tool("angle", "角度捕捉")}${this.tool("percent", "百分比捕捉")}${this.tool("spin", "微调器捕捉")}${bar}
      ${this.tool("sets", "编辑命名选择集")}${this.sel("v2", "命名选择集", "创建选择集")}${bar}
      ${this.tool("mirror", "镜像")}${this.tool("align", "对齐", "fly")}${bar}
      ${this.tool("list", "场景资源管理器")}${this.tool("layers", "层资源管理器")}${bar}
      ${this.tool("ribbon", "切换功能区", "on")}${this.tool("curve", "曲线编辑器")}${this.tool("dope", "摄影表")}${bar}
      ${this.tool("schem", "图解视图", "fly")}${bar}
      ${this.tool("setup", "渲染设置")}${this.tool("frame", "渲染帧窗口")}${this.tool("render", "渲染产品", "fly")}${this.tool("cloud", "云渲染")}${this.tool("gallery", "渲染库")}
      <span class="dotsv"></span>
      ${this.sel("path mono", "项目文件夹", "C:\\Users\\··· Max 2021")}
      <button class="more" aria-label="更多">${this.chevrons()}</button>
    </div>`;
  }

  private command() {
    return html`<aside class="panel">
      <div class="dotsh"></div>
      <div class="ptabs">${panelTabs.map((t) => html`<button aria-label="命令面板">${icon(t)}</button>`)}<button aria-label="更多">${icon(svg`<path d="M3 4l3 3-3 3M7 4l3 3-3 3" fill="none" stroke="#ccc" stroke-width="1.200"/>`, 14)}</button></div>
      <div class="cats">${cats.map((c, i) => html`<button class=${classMap({ on: i === 3 })} aria-label="类别">${icon(c, 20)}</button>`)}</div>
      ${this.sel("", "子类别", "标准")}
      <div class="scroll">
        <section class="roll">
          <h2>对象类型<i></i></h2>
          <label class="auto"><input type="checkbox" disabled />自动栅格</label>
          <div class="btns"><button>物理</button><button>目标</button><button>自由</button></div>
        </section>
        <section class="roll">
          <h2>名称和颜色<i></i></h2>
          <div class="name"><input class="mono" aria-label="名称" value="选择了 1 个 摄影机" /><button aria-label="颜色"></button></div>
        </section>
      </div>
    </aside>`;
  }

  private timeline() {
    const ticks = Array.from({ length: 101 }, (_, i) => i);
    return html`<div class="time">
        <span class="dotsv"></span>
        <div class="slider mono">
          <button aria-label="上一帧">${icon(svg`<path d="M8 2L4 6l4 4" fill="none" stroke="#ddd" stroke-width="1.300"/>`, 12)}</button>
          <button class="knob">0 / 100</button>
          <button aria-label="下一帧">${icon(svg`<path d="M4 2l4 4-4 4" fill="none" stroke="#ddd" stroke-width="1.300"/>`, 12)}</button>
        </div>
        <button class="mini" aria-label="迷你曲线编辑器">${icon(svg`<path d="M2 2v13" stroke="#bbb" stroke-width="3" stroke-dasharray="1.500 1.500"/><path d="M6 11C8 0 10 0 11 8s3 7 4-1" fill="none" stroke=${T} stroke-width="1.300"/>`, 16)}</button>
        <div class="ruler">${ticks.map((i) => html`<div class="tick ${classMap({ maj: i % 5 === 0, now: i === 0 })}">${i % 5 === 0 ? html`<span>${i}</span>` : ""}</div>`)}</div>
      </div>`;
  }

  private statusBar() {
    const p = (d: string, label: string) => html`<button aria-label=${label}>${icon(svg`<path d=${d} fill="#ddd"/>`, 16)}</button>`;
    return html`<footer class="status">
      <div class="script"><input class="pink" aria-label="宏录制器" /><input class="mono" aria-label="侦听器" value="MAXScript 迷" /></div>
      <span class="vbar"></span>
      <div class="msg"><span class="mono">选择了 1 个 摄影机</span><span>单击并拖动以选择并移动对象</span></div>
      <div class="coord">
        <div class="row">
          <button aria-label="孤立当前选择">${icon(svg`<path d="M2 5V2h3M11 2h3v3M2 11v3h3M14 11v3h-3" fill="none" stroke="#ccc" stroke-width="1.300"/><path d="M5 5h6v6H5Z" fill=${T}/>`, 16)}</button>
          <button aria-label="选择锁定">${icon(svg`<path d="M3 7h10v8H3Z" fill="#ccc"/><path d="M5 7V4a3 3 0 0 1 6 0v3" fill="none" stroke="#ccc" stroke-width="1.800"/><path d="M8 10v3" stroke="#333" stroke-width="2"/>`, 16)}</button>
          <button aria-label="变换输入">${icon(svg`<path d="M1.500 1.500h13v13h-13Z" fill="none" stroke="#ccc" stroke-width="1.500"/><circle cx="8" cy="8" r="3" fill="none" stroke="#ccc" stroke-width="2"/><path d="M8 2v4M8 10v4M2 8h4M10 8h4" stroke="#ccc"/>`, 16)}</button>
          <label class="mono">X:<input /></label><label class="mono">Y:<input /></label><label class="mono">Z:<input /></label>
          <span class="grid">栅格 = 10.0mm</span>
        </div>
        <div class="row tag"><button class="snap" aria-label="时间标记">${icon(svg`<path d="M8 1.500l6 3v7l-6 3-6-3v-7ZM2 4.500l6 3 6-3M8 7.500v7" fill="none" stroke="#dce8f6"/>`, 16)}</button><span>添加时间标记</span></div>
      </div>
      <div class="playb">
        <div class="row">${p("M1 3h2v10H1ZM9 3v10L4 8ZM15 3v10l-5-5Z", "转至开头")}${p("M7 3v10L1 8ZM9 3h2v10H9ZM13 3h2v10h-2Z", "上一帧")}${p("M3 0l12 8-12 8Z", "播放")}${p("M9 3v10l6-5ZM1 3h2v10H1ZM5 3h2v10H5Z", "下一帧")}${p("M13 3h2v10h-2ZM1 3v10l5-5ZM7 3v10l5-5Z", "转至结尾")}</div>
        <div class="row">${p("M7 3v10L2 8ZM9 3v10l5-5Z", "关键点模式")}
          <span class="frame mono"><input aria-label="当前帧" value="0" />${icon(svg`<path d="M3 5l3-4 3 4ZM3 7l3 4 3-4Z" fill="#ddd"/>`, 12)}</span>
          <button aria-label="时间配置">${icon(svg`<circle cx="7" cy="6" r="5.500" fill="#ccc"/><path d="M7 2v4l3 2" stroke="#333" fill="none"/><circle cx="11" cy="11" r="3" fill="none" stroke=${G} stroke-width="2.500"/>`, 16)}</button></div>
      </div>
      <button class="big" aria-label="设置关键点">${icon(svg`<path d="M14 4v20M3 14h22" stroke="#ddd" stroke-width="4.500"/><path d="M16 30l8-8" stroke=${T} stroke-width="2.400"/><circle cx="26" cy="20" r="3" fill="none" stroke=${T} stroke-width="2"/><path d="M17 25l4 4" stroke=${T} stroke-width="2"/>`, 32)}</button>
      <div class="keys">
        <button>自动关键点</button>${this.sel("", "选定对象", "选定对象")}
        <button>设置关键点</button>
        <div class="filt">${icon(svg`<path d="M3 18c3-3 3-8 2-12M17 18c-3-3-3-8-2-12M2 6h5M13 6h5" fill="none" stroke=${T} stroke-width="1.800"/><path d="M8.500 3h3v3h-3Z" fill="none" stroke="#ccc"/>`, 20)}<button>关键点过滤器...</button></div>
      </div>
      <div class="nav">${nav.map((n, i) => html`<button class=${classMap({ fly: [2, 3, 5, 6].includes(i) })} aria-label="视图导航">${icon(n, 20)}</button>`)}</div>
    </footer>`;
  }

  private taskbar() {
    return html`<nav class="task">
      ${taskIcons.map(([label, w, body, cls]) => html`<button class="app ${cls}" style="width:${w}px" aria-label=${label}>${icon(body)}</button>`)}
      <div class="tray">
        <button aria-label="安全">${icon(svg`<circle cx="10" cy="10" r="8" fill="#f1df1c"/><path d="M3 14a8 8 0 0 0 14 0c2 0 1-8 0-8 1 8-8 10-14 8Z" fill="#2c9a35"/><path d="M10 6v8M6 10h8" stroke="#1a6e24" stroke-width="2.400"/>`, 20)}</button>
        <button aria-label="输入法">${icon(svg`<path d="M3 2h14v16H3Z" fill="#1c2228"/><path d="M10 3C6 8 5 17 10 17c5 0 4-7 0-6" fill="none" stroke="#fff" stroke-width="2.200"/><path d="M10 17c4 0 4-5 1-6" fill="none" stroke="#27a84c" stroke-width="2.200"/>`, 20)}</button>
        <button aria-label="电源">${icon(svg`<path d="M7 7h10v7H7ZM18 9v3" fill="none" stroke="#fff" stroke-width="1.500"/><path d="M9 9h6v3H9ZM2 5h5v4H2ZM4 9v6h3" fill="#fff"/>`, 20)}</button>
        <button aria-label="网络">${icon(svg`<path d="M5 5.500h13v8H5ZM11 14v3M7 17h8M2 4h4v4H2Z" fill="none" stroke="#fff" stroke-width="1.300"/>`, 20)}</button>
        <button aria-label="音量">${icon(svg`<path d="M2 8h3l4-4v12l-4-4H2Z" fill="none" stroke="#fff" stroke-width="1.300"/><path d="M11 8q1.500 2 0 4M13.500 6q3 4 0 8M16 4q4 6 0 12" fill="none" stroke="#fff" stroke-width="1.200"/>`, 20)}</button>
        <button class="lang">ENG</button>
        <button class="clock"><span>21:24 周五</span><span>2021/4/9</span></button>
        <button class="note" aria-label="通知">${icon(svg`<path d="M3 4h18v14h-8l-4 4v-4H3Z" fill="#fff"/><path d="M6 8h12M6 11h12M6 14h8" stroke="#1a2544"/><circle cx="19" cy="18" r="7" fill="#2b2f3a" stroke="#777"/><text x="19" y="22" text-anchor="middle" font-size="12" fill="#fff" font-family="Open Sans, sans-serif">1</text>`, 28)}</button>
        <span class="peek"></span>
      </div>
    </nav>`;
  }

  render() {
    return html`
      ${this.titleBar()}
      <nav class="menu">
        ${menus.map(([n, k]) => html`<button>${n}<span class="mono key">${k}</span></button>`)}
        <span class="space">${this.chevrons()}</span>
        <span class="ws">工作区: ${this.sel("", "工作区", "默认")}</span>
      </nav>
      ${this.toolbar()}
      <div class="body">
        <div class="rail">
          <div class="dotsh"></div>
          ${this.railBtn("teapot", "fly")}${this.railBtn("cloud")}${this.railBtn("window")}<hr />
          ${this.railBtn("bulb")}<hr />${this.railBtn("camera")}<hr />
          ${["rect", "dome", "sphere", "pot2", "cone", "sun", "disc"].map((n) => this.railBtn(n))}<hr />
          ${["dots", "mol", "pyr", "puff", "grass"].map((n) => this.railBtn(n))}<hr />
          ${this.railBtn("ball", "fly")}
          <button class="balls" aria-label="材质"><svg width="24" height="14" viewBox="0 0 24 14"><circle cx="6.500" cy="6" r="5" fill="url(#red)"/><circle cx="17.500" cy="6" r="5" fill="#8fbf2c"/><circle cx="16" cy="4" r="1.500" fill="#e4f5b0"/><path d="M4 13h5" stroke="#36c" stroke-width="2"/><path d="M15 13h5" stroke="#c83" stroke-width="2"/></svg></button>
        </div>
        <div class="work">
          <div class="ribbon">
            <span class="dotsv"></span>
            <div class="rb">
              <div class="tabs"><button class="act">建模</button><button>自由形式</button><button>选择</button><button>对象绘制</button><button>填充</button>
                <button class="drop" aria-label="功能区选项"><svg width="24" height="10" viewBox="0 0 24 10"><rect y="1" width="13" height="7" rx="2" fill="#eee"/><path d="M4 3h5L6.500 6Z" fill="#333"/><path d="M19 4h5l-2.500 3Z" fill="#ccc"/></svg></button></div>
              <div class="sub"><button>多边形建模</button></div>
            </div>
          </div>
          <div class="main">
            <div class="lay"><div class="dotsh"></div>
              <div class="well">
                <button class="play" aria-label="展开">${icon(svg`<path d="M4 2l5 4-5 4Z" fill="#eee"/>`, 12)}</button>
                <button class="quad" aria-label="四视图"><svg width="32" height="30" viewBox="0 0 32 30"><path d="M1 2h14v12H1ZM17 2h14v12H17ZM1 16h14v12H1ZM17 16h14v12H17Z" fill="#56657c" stroke="#26364f" stroke-width="1.500"/></svg></button>
              </div>
            </div>
            <div class="views">
              ${views.map((v, i) => html`<section class="view ${classMap({ on: i === this.activeView })}" @click=${() => (this.activeView = i)}>
                <svg viewBox=${v.box} preserveAspectRatio="xMidYMid slice">${v.scene}</svg>
                <div class="labels">${v.labels.map((l) => html`<span>${l}</span>`)}</div>
              </section>`)}
            </div>
            ${this.command()}
          </div>
          ${this.timeline()}
        </div>
      </div>
      ${this.statusBar()}
      ${this.taskbar()}
    `;
  }
}
